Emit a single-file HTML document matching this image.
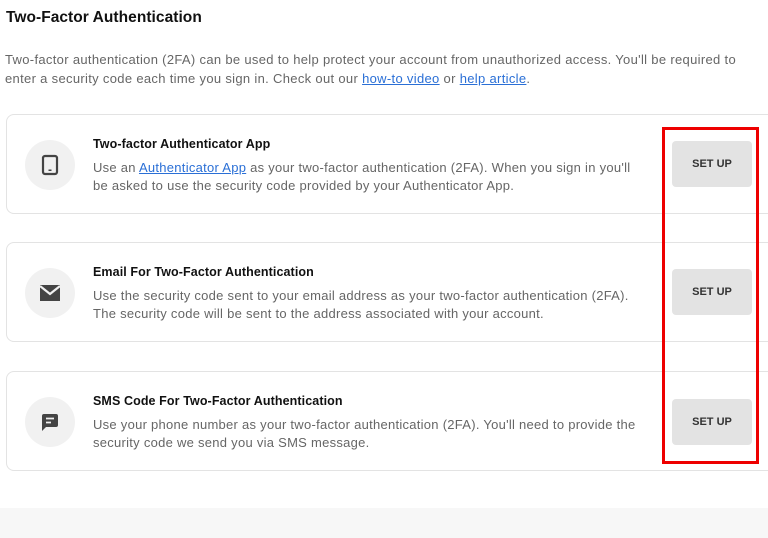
<!DOCTYPE html><html><head><style>
body{margin:0;width:768px;height:538px;background:#fff;font-family:"Liberation Sans",sans-serif;position:relative;overflow:hidden;color:#222}
.h{position:absolute;left:6px;top:9px;font-size:15.5px;font-weight:bold;color:#111;letter-spacing:0.05px}
.p{position:absolute;left:5px;top:50px;font-size:13px;line-height:19px;color:#666;white-space:nowrap;letter-spacing:0.32px}
a{color:#2a6fd6;text-decoration:underline}
.card{position:absolute;left:6px;width:770px;height:100px;border:1px solid #e3e3e3;border-radius:8px;box-sizing:border-box}
.ic{position:absolute;left:18px;top:25px;width:50px;height:50px;border-radius:50%;background:#f1f1f1;display:flex;align-items:center;justify-content:center}
.t{position:absolute;left:86px;font-size:12.5px;font-weight:bold;color:#111;letter-spacing:0.1px}
.d{position:absolute;left:86px;font-size:13px;line-height:18px;color:#666;white-space:nowrap;letter-spacing:0.27px}
.b{position:absolute;left:665px;top:26px;width:80px;height:46px;background:#e3e3e3;border-radius:4px;font-size:11px;font-weight:bold;color:#333;display:flex;align-items:center;justify-content:center}
.red{position:absolute;left:662px;top:127px;width:97px;height:337px;border:3px solid #e00;box-sizing:border-box}
.foot{position:absolute;left:0;top:508px;width:768px;height:30px;background:#f7f7f7}
</style></head><body>
<div class="h">Two-Factor Authentication</div>
<div class="p">Two-factor authentication (2FA) can be used to help protect your account from unauthorized access. You'll be required to<br>enter a security code each time you sign in. Check out our <a>how-to video</a> or <a>help article</a>.</div>
<div class="card" style="top:114px"><div class="ic"><svg width="20" height="22" viewBox="0 0 20 22"><rect x="3" y="2" width="14" height="18" rx="2" fill="none" stroke="#444" stroke-width="2.2"/><rect x="8.5" y="15.5" width="3" height="1.5" fill="#444"/></svg></div>
<div class="t" style="top:22px">Two-factor Authenticator App</div>
<div class="d" style="top:44px">Use an <a>Authenticator App</a> as your two-factor authentication (2FA). When you sign in you'll<br>be asked to use the security code provided by your Authenticator App.</div>
<div class="b">SET UP</div></div>
<div class="card" style="top:242px"><div class="ic"><svg width="22" height="18" viewBox="0 0 22 18"><path d="M1 1H21V17H1Z" fill="#444"/><path d="M1 2L11 10L21 2" fill="none" stroke="#f1f1f1" stroke-width="2.2"/></svg></div>
<div class="t" style="top:22px">Email For Two-Factor Authentication</div>
<div class="d" style="top:44px">Use the security code sent to your email address as your two-factor authentication (2FA).<br>The security code will be sent to the address associated with your account.</div>
<div class="b">SET UP</div></div>
<div class="card" style="top:371px"><div class="ic"><svg width="20" height="20" viewBox="0 0 20 20"><path d="M4 2H16A2 2 0 0 1 18 4V13A2 2 0 0 1 16 15H6L2 19V4A2 2 0 0 1 4 2Z" fill="#444"/><path d="M6 6.5H14M6 10.5H11" stroke="#f1f1f1" stroke-width="1.8"/></svg></div>
<div class="t" style="top:22px">SMS Code For Two-Factor Authentication</div>
<div class="d" style="top:44px">Use your phone number as your two-factor authentication (2FA). You'll need to provide the<br>security code we send you via SMS message.</div>
<div class="b" style="top:27px">SET UP</div></div>
<div class="red"></div>
<div class="foot"></div>
</body></html>
